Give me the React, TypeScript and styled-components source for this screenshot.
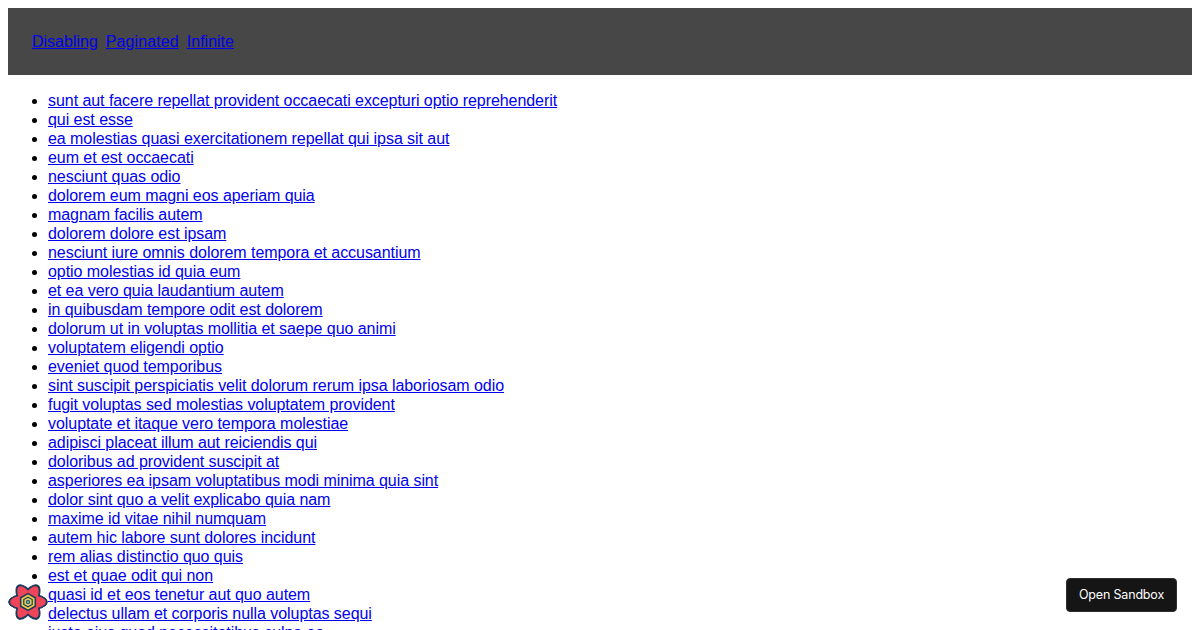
import React from "react";
import styled, { createGlobalStyle } from "styled-components";

const Global = createGlobalStyle`
  body {
    margin: 8px;
    font-family: "Liberation Sans", Arial, sans-serif;
    font-size: 16px;
    line-height: 19px;
    background: #fff;
    color: #000;
  }
  ::-webkit-scrollbar { display: none; }
`;

const Nav = styled.nav`
  display: flex;
  gap: 8px;
  padding: 24px;
  background: #474747;
`;

const NavLink = styled.a<{ $tracking?: number }>`
  color: #0000ee;
  text-decoration: underline;
  letter-spacing: ${(p) => p.$tracking ?? 0}px;
`;

const Posts = styled.ul`
  margin: 16px 0;
  padding-left: 40px;
`;

const PostLink = styled.a`
  color: #0000ee;
  text-decoration: underline;
  letter-spacing: -0.055px;
`;

const DevtoolsButton = styled.button`
  position: fixed;
  left: 8px;
  bottom: 8px;
  width: 40px;
  height: 40px;
  padding: 0;
  border: 0;
  background: transparent;
  display: block;
  line-height: 0;
`;

const SandboxButton = styled.a`
  position: fixed;
  right: 23px;
  bottom: 18px;
  width: 111px;
  height: 34px;
  padding-bottom: 2px;
  display: flex;
  align-items: center;
  justify-content: center;
  box-sizing: border-box;
  background: #151515;
  border: 1px solid #2f2f2f;
  border-radius: 4px;
  color: #fff;
  font-family: "Inter", "Liberation Sans", sans-serif;
  font-size: 12.5px;
  letter-spacing: -0.17px;
`;

const titles = [
  "sunt aut facere repellat provident occaecati excepturi optio reprehenderit",
  "qui est esse",
  "ea molestias quasi exercitationem repellat qui ipsa sit aut",
  "eum et est occaecati",
  "nesciunt quas odio",
  "dolorem eum magni eos aperiam quia",
  "magnam facilis autem",
  "dolorem dolore est ipsam",
  "nesciunt iure omnis dolorem tempora et accusantium",
  "optio molestias id quia eum",
  "et ea vero quia laudantium autem",
  "in quibusdam tempore odit est dolorem",
  "dolorum ut in voluptas mollitia et saepe quo animi",
  "voluptatem eligendi optio",
  "eveniet quod temporibus",
  "sint suscipit perspiciatis velit dolorum rerum ipsa laboriosam odio",
  "fugit voluptas sed molestias voluptatem provident",
  "voluptate et itaque vero tempora molestiae",
  "adipisci placeat illum aut reiciendis qui",
  "doloribus ad provident suscipit at",
  "asperiores ea ipsam voluptatibus modi minima quia sint",
  "dolor sint quo a velit explicabo quia nam",
  "maxime id vitae nihil numquam",
  "autem hic labore sunt dolores incidunt",
  "rem alias distinctio quo quis",
  "est et quae odit qui non",
  "quasi id et eos tenetur aut quo autem",
  "delectus ullam et corporis nulla voluptas sequi",
  "iusto eius quod necessitatibus culpa ea",
];

const NAVY = "#17395c";
const RED = "#ef4459";
const YELLOW = "#f4c945";

function Logo() {
  const angles = [0, 60, 120];
  return (
    <svg viewBox="0 0 40 40" width="40" height="40" aria-hidden="true">
      {angles.map((a) => (
        <ellipse key={a} cx="20" cy="20" rx="19.4" ry="8.2" transform={`rotate(${a} 20 20)`} fill={NAVY} stroke={NAVY} strokeWidth="1" />
      ))}
      {angles.map((a) => (
        <ellipse key={a} cx="20" cy="20" rx="17.8" ry="6.9" transform={`rotate(${a} 20 20)`} fill={RED} />
      ))}
      <polygon points="20,11.6 27.3,15.8 27.3,24.2 20,28.4 12.7,24.2 12.7,15.8" fill={YELLOW} stroke={NAVY} strokeWidth="1.5" />
      <polygon points="20,15.2 24.2,17.6 24.2,22.4 20,24.8 15.8,22.4 15.8,17.6" fill="#e8d86a" stroke={NAVY} strokeWidth="1.2" />
      <circle cx="20" cy="20" r="1.8" fill="#6fb58f" stroke={NAVY} strokeWidth="0.9" />
    </svg>
  );
}

export default function App() {
  return (
    <>
      <Global />
      <Nav>
        <NavLink href="#">Disabling</NavLink>
        <NavLink href="#" $tracking={0.1}>Paginated</NavLink>
        <NavLink href="#">Infinite</NavLink>
      </Nav>
      <Posts>
        {titles.map((t) => (
          <li key={t}>
            <PostLink href="#">{t}</PostLink>
          </li>
        ))}
      </Posts>
      <DevtoolsButton aria-label="Open devtools">
        <Logo />
      </DevtoolsButton>
      <SandboxButton>Open Sandbox</SandboxButton>
    </>
  );
}
